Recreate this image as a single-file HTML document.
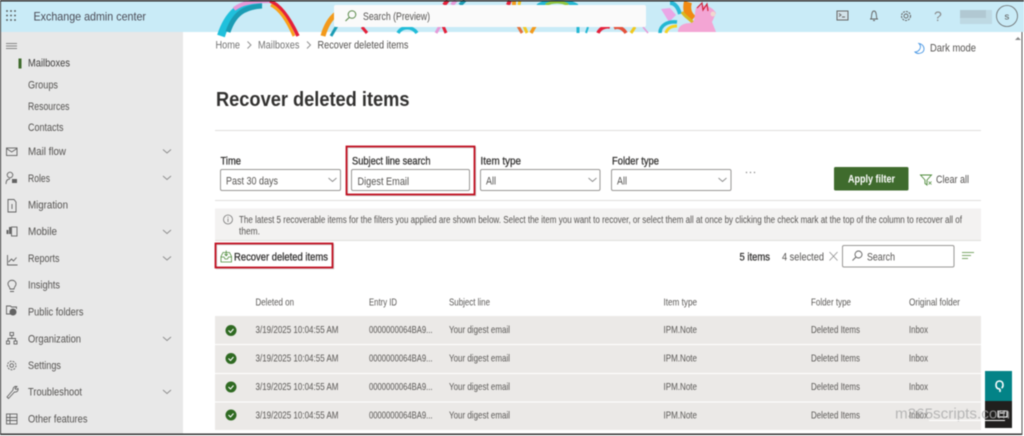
<!DOCTYPE html>
<html lang="en"><head><meta charset="utf-8"><title>Recover deleted items - Exchange admin center</title>
<style>
html,body{margin:0;padding:0;background:#fff;width:1024px;height:436px;overflow:hidden}
svg{display:block;font-family:"Liberation Sans",sans-serif}
.page{filter:blur(.45px)}
text{fill:#555351;font-size:11px}
.d{fill:#3f3e3d}
.b{font-weight:bold;fill:#323130}
.s{fill:#323130;stroke:#323130;stroke-width:.28px}
.t{font-size:10.5px;fill:#5a5856}
.i{fill:none;stroke:#636363;stroke-width:.9}
.c{fill:none;stroke:#8c8c8c;stroke-width:.9}
</style></head><body>
<svg width="1024" height="436" viewBox="0 0 1024 436" xmlns="http://www.w3.org/2000/svg">
<g class="page">
<rect width="1024" height="436" fill="#fff"/>
<!-- header -->
<rect x="0" y="0" width="1024" height="32" fill="#c9ebf7"/>
<g fill="none">
<path d="M221 36C228 14 240 3 262 2" stroke="#20c0dc" stroke-width="8"/>
<path d="M228 32C234 14 244 7 262 6" stroke="#1b9cb4" stroke-width="5"/>
<path d="M234 9C242 3 252 1 270 1" stroke="#e59ad8" stroke-width="4"/>
<path d="M270 1C281 5 290 19 298 36" stroke="#e4203a" stroke-width="3.500"/>
<path d="M271 5C281 10 288 22 294 36" stroke="#f9a01b" stroke-width="3"/>
<path d="M323 36C326 25 331 18 336 14" stroke="#f39a1c" stroke-width="5"/>
<path d="M331 36L338 24" stroke="#1b9cb4" stroke-width="3"/>
<path d="M362 27L367 33" stroke="#e4203a" stroke-width="3"/>
<path d="M398 33C402 26 412 26 417 33" stroke="#22bcd8" stroke-width="3.500"/>
<path d="M436 33L440 26" stroke="#e59ad8" stroke-width="3"/>
<path d="M446 33L443 26" stroke="#e4203a" stroke-width="3"/>
<path d="M444 5L448 0" stroke="#e4203a" stroke-width="4"/>
<path d="M452 5L456 0" stroke="#e59ad8" stroke-width="4"/>
<path d="M460 5L465 0" stroke="#1b9cb4" stroke-width="4"/>
<path d="M508 5L510 0" stroke="#e4203a" stroke-width="4"/>
<path d="M514 5V0" stroke="#f39a1c" stroke-width="4"/>
<path d="M519 5L520 0" stroke="#f5c820" stroke-width="3"/>
<path d="M538 6C544 0 570 0 577 6" stroke="#23b7d2" stroke-width="4"/>
<path d="M546 5C552 1 562 1 568 5" stroke="#8ec63f" stroke-width="3"/>
<path d="M518 26L522 33" stroke="#e4703a" stroke-width="3"/>
<path d="M524 26L527 33" stroke="#f5c820" stroke-width="3"/>
<path d="M535 26L531 33" stroke="#f39a1c" stroke-width="3.500"/>
<path d="M578 33V27" stroke="#23b7d2" stroke-width="3"/>
<path d="M586 33L588 27" stroke="#23b7d2" stroke-width="2"/>
<path d="M598 33C600 28 606 26 610 27" stroke="#e4203a" stroke-width="3.500"/>
<path d="M614 28C618 26 623 28 626 33" stroke="#e4503a" stroke-width="3.500"/>
<path d="M631 33L635 27" stroke="#f0c81c" stroke-width="3"/>
<path d="M643 27L648 33" stroke="#e59ad8" stroke-width="1.500"/>
</g>
<!-- unicorn -->
<path d="M661 9l9-1l6 7l-7 7z" fill="#eaa6e6"/>
<path d="M660 33C660 25 668 21 677 22" fill="none" stroke="#23b7d2" stroke-width="3.500"/>
<path d="M666 33C667 28 672 26 677 26" fill="none" stroke="#f5d320" stroke-width="3"/>
<path d="M670 3C675 3 678 7 680 14" fill="none" stroke="#2bb9d8" stroke-width="4"/>
<path d="M688 2C686 9 688 15 693 19" fill="none" stroke="#f08a12" stroke-width="8"/>
<path d="M682 12C686 18 692 20 695 25" fill="none" stroke="#d8b820" stroke-width="3"/>
<path d="M678 32C678 25 685 23 691 23C696 22 694 14 696 8C702 3 712 6 716 13L712 22L716 32Z" fill="#f3a5d4"/>
<path d="M697 8l5-5l1 7l4-6l1 7" fill="none" stroke="#d0233a" stroke-width="1.200"/>
<circle cx="713" cy="14" r="2.500" fill="#f0d8d0"/>
<!-- search -->
<rect x="334" y="5" width="312" height="22" rx="2" fill="#fafafa"/>
<circle cx="352" cy="14.500" r="3.800" fill="none" stroke="#5b8a4a" stroke-width="1"/>
<path d="M349.300 17.400L345.500 21" stroke="#5b8a4a" stroke-width="1.100"/>
<text x="363" y="20" textLength="67" lengthAdjust="spacingAndGlyphs" fill="#666">Search (Preview)</text>
<!-- waffle -->
<g fill="#4a4a4a"><circle cx="7" cy="11" r=".9"/><circle cx="11" cy="11" r=".9"/><circle cx="15" cy="11" r=".9"/><circle cx="7" cy="15.500" r=".9"/><circle cx="11" cy="15.500" r=".9"/><circle cx="15" cy="15.500" r=".9"/><circle cx="7" cy="20" r=".9"/><circle cx="11" cy="20" r=".9"/><circle cx="15" cy="20" r=".9"/></g>
<text x="33.500" y="20.500" textLength="112.500" lengthAdjust="spacingAndGlyphs" style="font-size:12px;fill:#4a4a55">Exchange admin center</text>
<!-- header right icons -->
<rect x="837" y="11" width="11" height="9" fill="#d3e3ea" stroke="#666"/>
<path d="M839 13.500l2 1.500l-2 1.500M842 17h3" class="i" stroke-width=".8"/>
<path d="M870 19h8M871 19c1-2 0-8 3-8s2 6 3 8M873 20.500h2" class="i"/>
<circle cx="906" cy="16" r="2" class="i"/><circle cx="906" cy="16" r="4.500" fill="none" stroke="#666" stroke-width="1.100" stroke-dasharray="2 1"/>
<text x="934" y="21" style="font-size:14px;fill:#888">?</text>
<rect x="960" y="10" width="32" height="14" fill="#b7cdd6" opacity=".6"/>
<rect x="960" y="10" width="26" height="8" fill="#a9bdc6" opacity=".6"/>
<circle cx="1007" cy="16" r="10.500" fill="none" stroke="#666" stroke-width=".8"/>
<text x="1004.500" y="19.500" style="font-size:9.500px">s</text>
<!-- sidebar -->
<rect x="0" y="32" width="183" height="402" fill="#e8e8e8"/>
<path d="M6 43.500h11M6 46h11M6 48.500h11" stroke="#666" stroke-width=".8"/>
<rect x="18.500" y="58.500" width="3" height="10" fill="#3f6b2d"/>
<text x="28" y="66.500" textLength="42" lengthAdjust="spacingAndGlyphs" class="d">Mailboxes</text>
<text x="28" y="88.500" textLength="30" lengthAdjust="spacingAndGlyphs">Groups</text>
<text x="28" y="110" textLength="41.500" lengthAdjust="spacingAndGlyphs">Resources</text>
<text x="28" y="131" textLength="35.500" lengthAdjust="spacingAndGlyphs">Contacts</text>
<text x="28" y="155" textLength="38" lengthAdjust="spacingAndGlyphs">Mail flow</text>
<text x="28" y="182" textLength="22" lengthAdjust="spacingAndGlyphs">Roles</text>
<text x="28" y="208.500" textLength="40" lengthAdjust="spacingAndGlyphs">Migration</text>
<text x="28" y="235" textLength="29" lengthAdjust="spacingAndGlyphs">Mobile</text>
<text x="28" y="262" textLength="31.500" lengthAdjust="spacingAndGlyphs">Reports</text>
<text x="28" y="288.500" textLength="32" lengthAdjust="spacingAndGlyphs">Insights</text>
<text x="28" y="315.500" textLength="55.500" lengthAdjust="spacingAndGlyphs">Public folders</text>
<text x="28" y="342.500" textLength="53" lengthAdjust="spacingAndGlyphs">Organization</text>
<text x="28" y="369" textLength="33" lengthAdjust="spacingAndGlyphs">Settings</text>
<text x="28" y="395.500" textLength="54" lengthAdjust="spacingAndGlyphs">Troubleshoot</text>
<text x="28" y="422.500" textLength="59.500" lengthAdjust="spacingAndGlyphs">Other features</text>
<path class="c" d="M163 149.500l4 3.500l4-3.500M163 176l4 3.500l4-3.500M163 230l4 3.500l4-3.500M163 256.500l4 3.500l4-3.500M163 337l4 3.500l4-3.500M163 390l4 3.500l4-3.500"/>
<!-- sidebar icons -->
<g class="i">
<rect x="6.500" y="148" width="10.500" height="7.500"/><path d="M6.500 148.500l5.200 3.500l5.300-3.500"/>
<circle cx="10" cy="175" r="2.800"/><path d="M6 184c0-4 2-5 4-5"/>
<path d="M8 199.500h6l2 2.500v10h-8zM12 204v5"/>
<rect x="11.500" y="227" width="5.500" height="9"/>
<path d="M7.500 255v10h10M8.500 262l3-3l2 2l3-3.500"/>
<path d="M8 284c0-5 8-5 8 0c0 2-2 3-2 5h-4c0-2-2-3-2-5zM10 291.500h4"/>
<path d="M6.500 309v-3h4l1 1h5v2M6.500 309v5h5"/>
<rect x="10" y="332.500" width="3.500" height="3"/><rect x="6.500" y="341" width="3" height="3"/><rect x="14" y="341" width="3" height="3"/><path d="M11.800 335.500v3M8 341v-2.500h7.500v2.500"/>
<circle cx="11.700" cy="365.500" r="1.800"/><circle cx="11.700" cy="365.500" r="4.300" stroke-dasharray="2 1"/>
<path d="M7 397l6-7c0-3 2-4 4-3.500l-2 2l1 1l2-1c.5 2-1 4-3.500 3.500l-6 6.500z"/>
<rect x="6.500" y="414" width="10.500" height="10"/><path d="M6.500 417.500h10.500M6.500 420.500h10.500M10 414v10"/>
</g>
<g fill="#636363"><rect x="12" y="179" width="5" height="4"/><rect x="6.500" y="230" width="2" height="4"/><rect x="9" y="227" width="2" height="7"/><circle cx="13" cy="312" r="3.500"/></g>
<!-- breadcrumb -->
<text x="215.500" y="48.500" textLength="24.500" lengthAdjust="spacingAndGlyphs" style="fill:#737373">Home</text>
<path d="M247.500 41.500l3.500 3.500l-3.500 3.500M307 41.500l3.500 3.500l-3.500 3.500" class="c" stroke-width=".8"/>
<text x="258" y="48.500" textLength="41.500" lengthAdjust="spacingAndGlyphs" style="fill:#737373">Mailboxes</text>
<text x="317.500" y="48.500" textLength="91" lengthAdjust="spacingAndGlyphs">Recover deleted items</text>
<!-- dark mode -->
<path d="M919 43.500c3 3 1 8-4 8.500c3 3 9 1 9-3c0-3-2-5-5-5.500z" fill="none" stroke="#4a98e4" stroke-width=".9"/>
<text x="930" y="51.500" textLength="46" lengthAdjust="spacingAndGlyphs">Dark mode</text>
<path d="M1015 40l3-3l3 3z" fill="#888"/>
<!-- title -->
<text x="216" y="106" textLength="193.500" lengthAdjust="spacingAndGlyphs" class="b" style="font-size:20px">Recover deleted items</text>
<rect x="215" y="130" width="766" height="1" fill="#e1dfdd"/>
<!-- filters -->
<text x="220.500" y="164.500" textLength="20.500" lengthAdjust="spacingAndGlyphs" class="s">Time</text>
<text x="352" y="164.500" textLength="78.500" lengthAdjust="spacingAndGlyphs" class="s">Subject line search</text>
<text x="480.500" y="164.500" textLength="40.500" lengthAdjust="spacingAndGlyphs" class="s">Item type</text>
<text x="612" y="164.500" textLength="47" lengthAdjust="spacingAndGlyphs" class="s">Folder type</text>
<g fill="#fff" stroke="#9a9896" stroke-width="1">
<rect x="220.500" y="169.500" width="120" height="21" rx="1.500"/>
<rect x="351.500" y="169.500" width="118" height="21" rx="1.500"/>
<rect x="480.500" y="169.500" width="119.500" height="21" rx="1.500"/>
<rect x="611.500" y="169.500" width="119.500" height="21" rx="1.500"/>
</g>
<text x="226" y="184.500" textLength="52" lengthAdjust="spacingAndGlyphs">Past 30 days</text>
<text x="357.500" y="185" textLength="51.500" lengthAdjust="spacingAndGlyphs">Digest Email</text>
<text x="486" y="184.500" textLength="10" lengthAdjust="spacingAndGlyphs">All</text>
<text x="617" y="184.500" textLength="10" lengthAdjust="spacingAndGlyphs">All</text>
<path d="M328.500 178l4 3.500l4-3.500M588.500 178l4 3.500l4-3.500M718.500 178l4 3.500l4-3.500" class="c" stroke-width=".8"/>
<g fill="#888"><circle cx="746.500" cy="172.500" r=".7"/><circle cx="750.500" cy="172.500" r=".7"/><circle cx="754.500" cy="172.500" r=".7"/></g>
<rect x="834" y="167" width="74.500" height="23.500" rx="1.500" fill="#3f6b2d"/>
<text x="848" y="182.500" textLength="47" lengthAdjust="spacingAndGlyphs" style="font-weight:bold;fill:#fff">Apply filter</text>
<path d="M920.500 175h11l-4.500 5v5l-2-1.500v-3.500z" fill="none" stroke="#4d8a3a" stroke-width=".9"/>
<path d="M928.500 181.500l3 3M931.500 181.500l-3 3" stroke="#4d8a3a" stroke-width=".7"/>
<text x="936" y="183" textLength="33" lengthAdjust="spacingAndGlyphs">Clear all</text>
<rect x="215" y="200" width="766" height="1" fill="#e1dfdd"/>
<!-- info bar -->
<rect x="215" y="208.500" width="766" height="32" fill="#f3f2f1"/>
<rect x="215" y="240" width="766" height="1" fill="#e1dfdd"/>
<circle cx="228" cy="219.500" r="4.500" fill="none" stroke="#777" stroke-width=".8"/>
<path d="M228 218.500v3.500M228 216.800v1" stroke="#777" stroke-width=".8"/>
<text x="239" y="222.800" textLength="723" lengthAdjust="spacingAndGlyphs" style="font-size:10px">The latest 5 recoverable items for the filters you applied are shown below. Select the item you want to recover, or select them all at once by clicking the check mark at the top of the column to recover all of</text>
<text x="239" y="234.500" textLength="21" lengthAdjust="spacingAndGlyphs" style="font-size:10px">them.</text>
<!-- toolbar -->
<path d="M221 256.500l2-4h6.500l2 4v5.500h-10.500zM221 257h3l1 2h2.500l1-2h3M226.200 250.500v5M224.500 254l1.700 1.800l1.700-1.800" fill="none" stroke="#4d8a3a" stroke-width=".8"/>
<text x="234" y="260.500" textLength="94" lengthAdjust="spacingAndGlyphs" class="s">Recover deleted items</text>
<text x="739.500" y="260.500" textLength="30.500" lengthAdjust="spacingAndGlyphs" class="s">5 items</text>
<text x="782" y="260.500" textLength="42" lengthAdjust="spacingAndGlyphs">4 selected</text>
<path d="M829.500 252l8 8.500M837.500 252l-8 8.500" stroke="#888" stroke-width=".7"/>
<rect x="842.500" y="245.500" width="111.500" height="21.500" rx="1.500" fill="#fff" stroke="#9a9896"/>
<circle cx="858.500" cy="254.500" r="3.500" fill="none" stroke="#636363" stroke-width=".9"/>
<path d="M856 257l-3.500 3.500" stroke="#636363" stroke-width=".9"/>
<text x="867" y="260.500" textLength="28" lengthAdjust="spacingAndGlyphs">Search</text>
<path d="M962 252.500h12M962 255.500h9M962 258.500h6" stroke="#7ca86a" stroke-width=".9"/>
<!-- red boxes -->
<rect x="347.500" y="147.500" width="128" height="48" fill="none" stroke="#000" stroke-opacity=".18" stroke-width="1.500"/>
<rect x="216.500" y="244.500" width="117" height="24" fill="none" stroke="#000" stroke-opacity=".18" stroke-width="1.500"/>
<rect x="346.500" y="146.500" width="128" height="48" fill="none" stroke="#c00d1e" stroke-width="1.800"/>
<rect x="215.500" y="243.500" width="117" height="24" fill="none" stroke="#c00d1e" stroke-width="1.800"/>
<!-- col headers -->
<text class="t" x="255.500" y="305.500" textLength="38.500" lengthAdjust="spacingAndGlyphs">Deleted on</text>
<text class="t" x="369" y="305.500" textLength="28" lengthAdjust="spacingAndGlyphs">Entry ID</text>
<text class="t" x="449" y="305.500" textLength="41" lengthAdjust="spacingAndGlyphs">Subject line</text>
<text class="t" x="663.500" y="305.500" textLength="33.500" lengthAdjust="spacingAndGlyphs">Item type</text>
<text class="t" x="811" y="305.500" textLength="40" lengthAdjust="spacingAndGlyphs">Folder type</text>
<text class="t" x="909" y="305.500" textLength="51" lengthAdjust="spacingAndGlyphs">Original folder</text>
<!-- rows -->
<g fill="#ebe9e7">
<rect x="215" y="316" width="766" height="28"/>
<rect x="215" y="345" width="766" height="28"/>
<rect x="215" y="374" width="766" height="27.500"/>
<rect x="215" y="402.500" width="766" height="27.500"/>
</g>
<g fill="#2f6a22"><circle cx="231" cy="330.500" r="5.500"/><circle cx="231" cy="358.500" r="5.500"/><circle cx="231" cy="387" r="5.500"/><circle cx="231" cy="415" r="5.500"/></g>
<path d="M228.500 330.500l2 2l3-3.500M228.500 358.500l2 2l3-3.500M228.500 387l2 2l3-3.500M228.500 415l2 2l3-3.500" fill="none" stroke="#fff" stroke-width="1.100"/>
<text class="t" x="255.500" y="333" textLength="83" lengthAdjust="spacingAndGlyphs">3/19/2025 10:04:55 AM</text>
<text class="t" x="369" y="333" textLength="63.500" lengthAdjust="spacingAndGlyphs">0000000064BA9...</text>
<text class="t" x="449" y="333" textLength="61" lengthAdjust="spacingAndGlyphs">Your digest email</text>
<text class="t" x="663.500" y="333" textLength="33.500" lengthAdjust="spacingAndGlyphs">IPM.Note</text>
<text class="t" x="811" y="333" textLength="49" lengthAdjust="spacingAndGlyphs">Deleted Items</text>
<text class="t" x="909" y="333" textLength="19" lengthAdjust="spacingAndGlyphs">Inbox</text>
<text class="t" x="255.500" y="361.500" textLength="83" lengthAdjust="spacingAndGlyphs">3/19/2025 10:04:55 AM</text>
<text class="t" x="369" y="361.500" textLength="63.500" lengthAdjust="spacingAndGlyphs">0000000064BA9...</text>
<text class="t" x="449" y="361.500" textLength="61" lengthAdjust="spacingAndGlyphs">Your digest email</text>
<text class="t" x="663.500" y="361.500" textLength="33.500" lengthAdjust="spacingAndGlyphs">IPM.Note</text>
<text class="t" x="811" y="361.500" textLength="49" lengthAdjust="spacingAndGlyphs">Deleted Items</text>
<text class="t" x="909" y="361.500" textLength="19" lengthAdjust="spacingAndGlyphs">Inbox</text>
<text class="t" x="255.500" y="390" textLength="83" lengthAdjust="spacingAndGlyphs">3/19/2025 10:04:55 AM</text>
<text class="t" x="369" y="390" textLength="63.500" lengthAdjust="spacingAndGlyphs">0000000064BA9...</text>
<text class="t" x="449" y="390" textLength="61" lengthAdjust="spacingAndGlyphs">Your digest email</text>
<text class="t" x="663.500" y="390" textLength="33.500" lengthAdjust="spacingAndGlyphs">IPM.Note</text>
<text class="t" x="811" y="390" textLength="49" lengthAdjust="spacingAndGlyphs">Deleted Items</text>
<text class="t" x="909" y="390" textLength="19" lengthAdjust="spacingAndGlyphs">Inbox</text>
<text class="t" x="255.500" y="418.500" textLength="83" lengthAdjust="spacingAndGlyphs">3/19/2025 10:04:55 AM</text>
<text class="t" x="369" y="418.500" textLength="63.500" lengthAdjust="spacingAndGlyphs">0000000064BA9...</text>
<text class="t" x="449" y="418.500" textLength="61" lengthAdjust="spacingAndGlyphs">Your digest email</text>
<text class="t" x="663.500" y="418.500" textLength="33.500" lengthAdjust="spacingAndGlyphs">IPM.Note</text>
<text class="t" x="811" y="418.500" textLength="49" lengthAdjust="spacingAndGlyphs">Deleted Items</text>
<text class="t" x="909" y="418.500" textLength="19" lengthAdjust="spacingAndGlyphs">Inbox</text>
<!-- help buttons -->
<rect x="985" y="371" width="27" height="30" fill="#038387"/>
<rect x="985" y="401" width="27" height="27" fill="#201f1e"/>
<path d="M1000 389c-3 0-4-1.500-4-4s1.500-4 3.500-4s3.500 1.500 3.500 4c0 1.500-.5 2.500-1.500 3" fill="none" stroke="#fff" stroke-width="1.600"/>
<path d="M1000 389v3" stroke="#fff" stroke-width="1.600"/>
<rect x="998" y="411" width="9" height="6" fill="none" stroke="#fff"/><path d="M1000 413h5" stroke="#fff"/>
<text x="895" y="418.500" textLength="115" lengthAdjust="spacingAndGlyphs" style="font-size:15px;fill:#aaa;opacity:.8">m365scripts.com</text>
<rect x="929" y="420" width="76" height="1" fill="#fff"/>
<!-- screenshot border -->
<rect x="0" y="0" width="1024" height="1.500" fill="#2a2a2a"/>
<rect x="0" y="0" width="1" height="435" fill="#333"/>
<rect x="0" y="433.500" width="1022" height="1.500" fill="#333"/>
<rect x="1021.500" y="32" width="1" height="403" fill="#555"/>
</g>
</svg>
</body></html>
